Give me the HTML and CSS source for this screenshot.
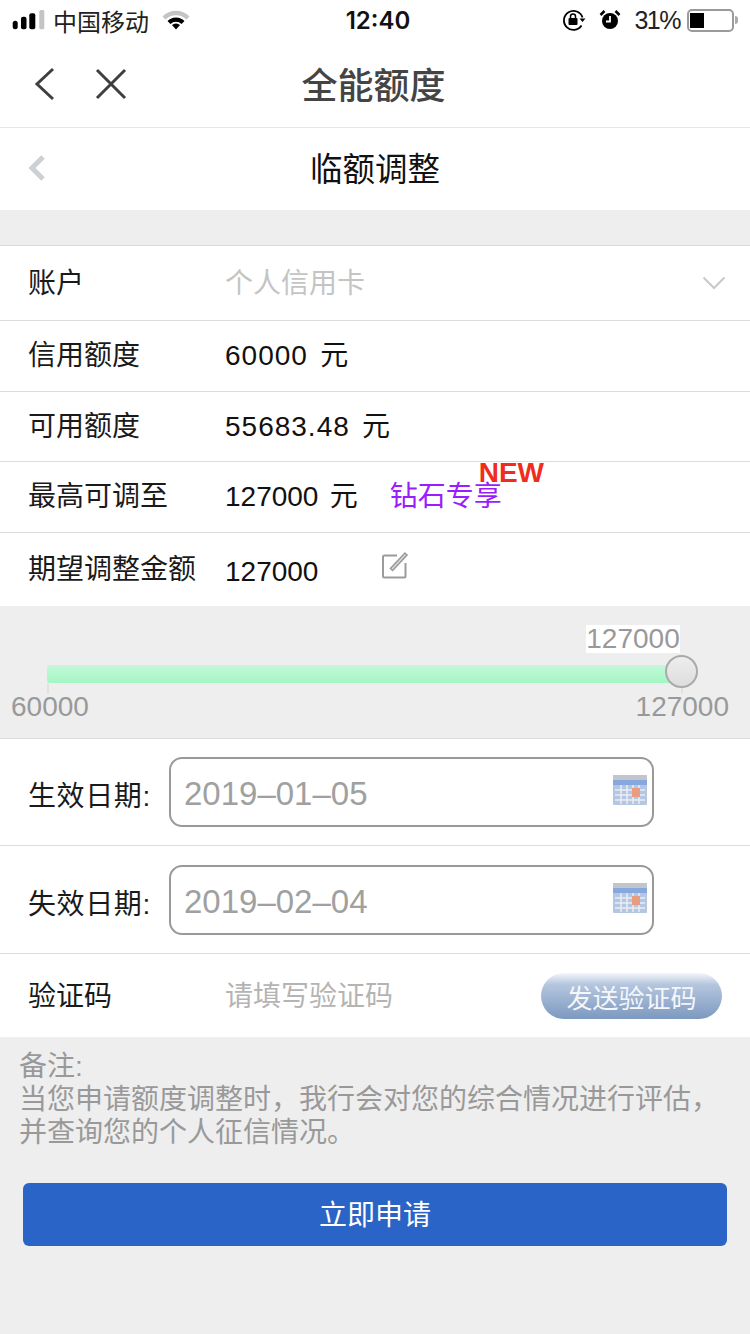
FILE: index.html
```html
<!DOCTYPE html>
<html lang="zh-CN">
<head>
    <meta charset="UTF-8">
    <meta name="viewport" content="width=device-width, initial-scale=1.0">
    <title>全能额度</title>
    <link rel="stylesheet" href="styles.css">
</head>
<body>
    <div class="status-bar">
        <div class="status-left">
            <svg class="signal" width="34" height="20" viewBox="0 0 34 20">
                <rect x="0.700" y="10.700" width="5" height="8.600" rx="2.500" fill="#000"/>
                <rect x="9" y="6.700" width="5.500" height="12.600" rx="2" fill="#000"/>
                <rect x="17.300" y="3.300" width="6" height="16" rx="2" fill="#000"/>
                <rect x="27.300" y="0" width="5" height="19.300" rx="1.500" fill="#c4c4c4"/>
            </svg>
            <span class="carrier">中国移动</span>
            <svg class="wifi" width="30" height="22" viewBox="0 0 30 22">
                <path d="M1.500 7.500 A19 19 0 0 1 28.500 7.500 L25.500 10.500 A15 15 0 0 0 4.500 10.500 Z" fill="#c4c4c4"/>
                <path d="M6.500 12 A12 12 0 0 1 23.500 12 L20.500 15 A8 8 0 0 0 9.500 15 Z" fill="#000"/>
                <path d="M11 16 A6 6 0 0 1 19 16 L15 20.500 Z" fill="#000"/>
            </svg>
        </div>
        <div class="status-time">12:40</div>
        <div class="status-right">
            <svg class="lock" width="24" height="24" viewBox="0 0 24 24">
                <path d="M20.500 9.500 A9.500 9.500 0 1 0 19.500 17.500" fill="none" stroke="#000" stroke-width="1.800"/>
                <path d="M17.500 10.500 h6 l-3 3.500 z" fill="#000"/>
                <rect x="6.500" y="10" width="9" height="7" rx="1" fill="#000"/>
                <path d="M8.500 10 V8.500 a2.500 2.500 0 0 1 5 0 V10" fill="none" stroke="#000" stroke-width="1.500"/>
            </svg>
            <svg class="alarm" width="22" height="22" viewBox="0 0 22 22">
                <circle cx="11" cy="12" r="8" fill="#000"/>
                <path d="M11 7 V12.500 H7" fill="none" stroke="#fff" stroke-width="1.800"/>
                <path d="M1.500 6 L5.500 2 M20.500 6 L16.500 2" stroke="#000" stroke-width="2.500"/>
            </svg>
            <span class="battery-text">31%</span>
            <div class="battery"><div class="battery-fill"></div></div>
            <div class="battery-tip"></div>
        </div>
    </div>

    <div class="nav-bar">
        <div class="nav-icons">
            <svg width="24" height="34" viewBox="0 0 24 34"><path d="M20 2 L4 17 L20 32" fill="none" stroke="#3f3f3f" stroke-width="3"/></svg>
            <svg width="32" height="32" viewBox="0 0 32 32"><path d="M2 2 L30 30 M30 2 L2 30" fill="none" stroke="#3f3f3f" stroke-width="3"/></svg>
        </div>
        <h1 class="nav-title">全能额度</h1>
    </div>

    <div class="sub-header">
        <svg class="sub-back" width="20" height="28" viewBox="0 0 20 28"><path d="M16 3 L5 14 L16 25" fill="none" stroke="#cdd0d4" stroke-width="5"/></svg>
        <h2 class="sub-title">临额调整</h2>
    </div>

    <div class="list">
        <div class="row row-account">
            <span class="row-label">账户</span>
            <span class="row-value placeholder">个人信用卡</span>
            <svg class="chevron" width="24" height="14" viewBox="0 0 24 14"><path d="M1.500 1.500 L12 12 L22.500 1.500" fill="none" stroke="#c9c9c9" stroke-width="2"/></svg>
        </div>
        <div class="row">
            <span class="row-label">信用额度</span>
            <span class="row-value num-wide">60000 元</span>
        </div>
        <div class="row">
            <span class="row-label">可用额度</span>
            <span class="row-value num-wide">55683.48 元</span>
        </div>
        <div class="row">
            <span class="row-label">最高可调至</span>
            <span class="row-value">127000 元</span>
            <span class="vip">钻石专享<span class="vip-new">NEW</span></span>
        </div>
        <div class="row row-expect">
            <span class="row-label">期望调整金额</span>
            <span class="row-value expect-value">127000</span>
            <svg class="edit" width="30" height="30" viewBox="0 0 30 30">
                <path d="M17 5.500 H4.500 a1.500 1.500 0 0 0 -1.500 1.500 V26 a1.500 1.500 0 0 0 1.500 1.500 H24 a1.500 1.500 0 0 0 1.500 -1.500 V13" fill="none" stroke="#9b9b9b" stroke-width="2"/>
                <path d="M11 20 L26.500 3.500" stroke="#9b9b9b" stroke-width="4.500"/>
                <path d="M12 19 L25.500 4.500" stroke="#dcdcdc" stroke-width="1.200"/>
            </svg>
        </div>
    </div>

    <div class="slider-box">
        <div class="slider-current"><span>127000</span></div>
        <div class="slider-track">
            <div class="slider-thumb"></div>
        </div>
        <div class="slider-scale">
            <span>60000</span>
            <span>127000</span>
        </div>
    </div>

    <div class="form">
        <div class="date-row">
            <span class="date-label">生效日期:</span>
            <div class="date-input">
                <span>2019–01–05</span>
                <svg class="calendar" width="34" height="30" viewBox="0 0 34 30">
                    <rect width="34" height="30" rx="1" fill="#b4c6e2"/>
                    <rect width="34" height="5" fill="#c2c5cb"/>
                    <rect y="5" width="34" height="5" fill="#86a8de"/>
                    <path d="M2 15 H32 M2 20 H32 M2 25 H32 M8 10 V29 M14 10 V29 M20 10 V29 M26 10 V29" stroke="#e8edf4" stroke-width="1.500"/>
                    <rect x="19" y="13" width="8" height="9" fill="#e89c80"/>
                </svg>
            </div>
        </div>
        <div class="date-row">
            <span class="date-label">失效日期:</span>
            <div class="date-input">
                <span>2019–02–04</span>
                <svg class="calendar" width="34" height="30" viewBox="0 0 34 30">
                    <rect width="34" height="30" rx="1" fill="#b4c6e2"/>
                    <rect width="34" height="5" fill="#c2c5cb"/>
                    <rect y="5" width="34" height="5" fill="#86a8de"/>
                    <path d="M2 15 H32 M2 20 H32 M2 25 H32 M8 10 V29 M14 10 V29 M20 10 V29 M26 10 V29" stroke="#e8edf4" stroke-width="1.500"/>
                    <rect x="19" y="13" width="8" height="9" fill="#e89c80"/>
                </svg>
            </div>
        </div>
        <div class="code-row">
            <span class="row-label">验证码</span>
            <span class="code-placeholder">请填写验证码</span>
            <button class="send-btn">发送验证码</button>
        </div>
    </div>

    <div class="note">
        <div>备注:</div>
        <div>当您申请额度调整时，我行会对您的综合情况进行评估，并查询您的个人征信情况。</div>
    </div>

    <div class="apply">
        <button class="apply-btn">立即申请</button>
    </div>
</body>
</html>
```

FILE: styles.css
```css
* {
    box-sizing: border-box;
}
html, body {
    margin: 0;
    padding: 0;
}
body {
    width: 750px;
    height: 1334px;
    overflow: hidden;
    background-color: #eeeeee;
    font-family: "Liberation Sans", "Noto Sans CJK SC", sans-serif;
    color: #111;
}
.status-bar {
    height: 44px;
    background: white;
    padding: 0 12px 4px 12px;
    display: flex;
    align-items: center;
    justify-content: space-between;
}
.status-left {
    display: flex;
    align-items: center;
    width: 256px;
}
.carrier {
    font-size: 24px;
    color: #222;
    margin-left: 7px;
    margin-right: 12px;
}
.status-time {
    font-family: Inter, "Liberation Sans", sans-serif;
    font-size: 24px;
    font-weight: 600;
    color: #111;
}
.status-right {
    display: flex;
    align-items: center;
    width: 250px;
    justify-content: flex-end;
}
.lock {
    margin-right: 13px;
}
.alarm {
    margin-right: 13px;
}
.battery-text {
    font-size: 25px;
    letter-spacing: -1.500px;
    color: #222;
    margin-right: 7px;
}
.battery {
    width: 47px;
    height: 23px;
    border: 2px solid #9a9a9a;
    border-radius: 5px;
    padding: 2px 1px;
}
.battery-fill {
    width: 14px;
    height: 100%;
    background: #000;
}
.battery-tip {
    width: 3px;
    height: 8px;
    margin-left: 1px;
    background: #aaa;
    border-radius: 0 3px 3px 0;
}
.nav-bar {
    height: 84px;
    background: white;
    border-bottom: 1px solid #e6e6e6;
    display: flex;
    align-items: center;
    justify-content: center;
    position: relative;
}
.nav-icons {
    position: absolute;
    left: 33px;
    top: 23px;
    display: flex;
    align-items: center;
    gap: 38px;
}
.nav-title {
    margin: 0;
    font-size: 36px;
    font-weight: 500;
    color: #444;
    padding: 0 3px 6px 0;
}
.sub-header {
    height: 82px;
    background: white;
    display: flex;
    align-items: center;
    justify-content: center;
    position: relative;
}
.sub-back {
    position: absolute;
    left: 27px;
    top: 26px;
}
.sub-title {
    margin: 0;
    font-size: 32.500px;
    font-weight: 400;
    color: #111;
    padding-bottom: 6px;
}
.list {
    margin-top: 35px;
    background: white;
    border-top: 1px solid #dcdcdc;
}
.row {
    height: 70.500px;
    border-bottom: 1px solid #dcdcdc;
    display: flex;
    align-items: center;
    padding: 0 0 5px 28px;
    font-size: 28px;
    position: relative;
}
.row-account {
    height: 75px;
}
.row-expect {
    height: 73.500px;
    border-bottom: none;
}
.row-label {
    width: 197px;
    font-size: 28px;
    color: #1a1a1a;
    flex-shrink: 0;
}
.row-value {
    font-size: 28px;
    color: #111;
    word-spacing: 3.500px;
}
.num-wide {
    letter-spacing: 1px;
}
.placeholder {
    color: #c4c4c4;
}
.chevron {
    position: absolute;
    right: 24px;
    top: 30px;
}
.vip {
    margin-left: 32px;
    color: #9b1cff;
    position: relative;
}
.vip-new {
    position: absolute;
    left: 89px;
    top: -18px;
    color: #f02c1c;
    font-size: 28px;
    font-weight: bold;
    line-height: 1.200;
}
.expect-value {
    width: 155px;
    padding-top: 10px;
}
.edit {
    margin-top: -3px;
}
.slider-box {
    height: 133px;
    border-bottom: 1px solid #dcdcdc;
    padding-top: 19px;
}
.slider-current {
    height: 28px;
    margin-left: 586px;
}
.slider-current span {
    display: inline-block;
    width: 94px;
    background: white;
    color: #999;
    font-size: 28px;
    line-height: 28px;
    text-align: center;
}
.slider-track {
    margin: 12px 0 0 47px;
    width: 635px;
    height: 18px;
    border-radius: 3px;
    background: linear-gradient(#c4f8d8, #a4f6c4);
    position: relative;
}
.slider-track::before,
.slider-track::after {
    content: "";
    position: absolute;
    top: 100%;
    width: 2px;
    height: 11px;
    background: #e2e2e2;
}
.slider-track::before {
    left: 0;
}
.slider-track::after {
    right: -1px;
}
.slider-thumb {
    position: absolute;
    right: -16px;
    top: -10px;
    width: 33px;
    height: 33px;
    border: 2px solid #aaa;
    border-radius: 50%;
    background: linear-gradient(#eeeeee, #dddddd);
    z-index: 1;
}
.slider-scale {
    display: flex;
    justify-content: space-between;
    padding: 8px 21px 0 11px;
    font-size: 28px;
    line-height: 32px;
    color: #999;
}
.form {
    background: white;
}
.date-row {
    height: 108px;
    border-bottom: 1px solid #dcdcdc;
    display: flex;
    align-items: center;
    padding-left: 28px;
}
.date-row:first-child {
    height: 107px;
}
.date-label {
    width: 141px;
    margin-top: 4px;
    font-size: 28px;
    letter-spacing: 0.600px;
    color: #1a1a1a;
    flex-shrink: 0;
}
.date-input {
    width: 485px;
    height: 70px;
    border: 2px solid #999;
    border-radius: 13px;
    display: flex;
    align-items: center;
    justify-content: space-between;
    padding: 4px 5px 0 13px;
    font-size: 33px;
    color: #a0a0a0;
}
.calendar {
    margin-top: -8px;
    filter: blur(0.500px);
}
.code-row {
    height: 83px;
    display: flex;
    align-items: center;
    padding-left: 28px;
}
.code-row .row-label,
.code-placeholder {
    margin-bottom: 3px;
}
.code-placeholder {
    font-size: 28px;
    color: #b4b4b4;
}
.send-btn {
    margin-left: auto;
    margin-right: 28px;
    width: 181px;
    height: 46px;
    border: none;
    border-radius: 23px;
    background: linear-gradient(#f3f6fa, #b5c6de 25%, #7c99c0);
    color: #f4f6fa;
    font-size: 26px;
    font-family: inherit;
    padding: 2px 0 0;
}
.note {
    padding: 13px 19px 0;
    font-size: 28px;
    line-height: 33px;
    color: #999;
}
.apply {
    padding: 34px 23px 0;
}
.apply-btn {
    width: 100%;
    height: 63px;
    border: none;
    border-radius: 6px;
    background: #2a64c6;
    color: white;
    font-size: 28px;
    font-family: inherit;
    padding: 0 0 4px;
}
```
